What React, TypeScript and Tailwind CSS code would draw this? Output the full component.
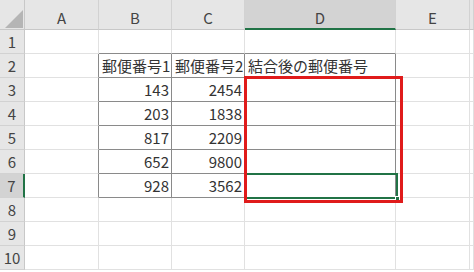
import React from "react";

const cols = ["A", "B", "C", "D", "E", ""];
const data: [string, string, string][] = [
  ["143", "2454", ""],
  ["203", "1838", ""],
  ["817", "2209", ""],
  ["652", "9800", ""],
  ["928", "3562", ""],
];

const font = { fontFamily: '"Noto Sans CJK JP", "Liberation Sans", sans-serif' };

export default function App() {
  const rows = Array.from({ length: 10 }, (_, i) => i + 1);
  const dark = "#8a8a8a";
  const grid = "#e1e1e1";

  const cellBorder = (r: number, c: number) => {
    const inTable = (rr: number, cc: number) => rr >= 2 && rr <= 7 && cc >= 2 && cc <= 4;
    const right = inTable(r, c) || inTable(r, c + 1) ? dark : grid;
    const bottom = inTable(r, c) || inTable(r + 1, c) ? dark : grid;
    return { borderRightColor: right, borderBottomColor: bottom };
  };

  const cellText = (r: number, c: number): { t: string; right: boolean } => {
    if (r === 2) {
      if (c === 2) return { t: "郵便番号1", right: false };
      if (c === 3) return { t: "郵便番号2", right: false };
      if (c === 4) return { t: "結合後の郵便番号", right: false };
    }
    if (r >= 3 && r <= 7) {
      if (c === 2) return { t: data[r - 3][0], right: true };
      if (c === 3) return { t: data[r - 3][1], right: true };
    }
    return { t: "", right: false };
  };

  return (
    <div className="relative w-[474px] h-[272px] overflow-hidden bg-white" style={font}>
      <div className="grid grid-cols-[25px_74px_73px_73px_151px_74px_1fr] grid-rows-[30px_repeat(10,24px)]">
        <div className="relative bg-[#e6e6e6] border-r border-b border-[#c8c8c8]">
          <svg className="absolute left-[5px] top-[10px]" width="18" height="18" viewBox="0 0 18 18">
            <polygon points="18,0 18,18 0,18" fill="#b5b5b5" />
          </svg>
        </div>
        {cols.map((c, i) => (
          <div
            key={c + i}
            className={
              "flex items-center justify-center pt-[6px] text-[15px] leading-none text-[#444] border-r border-[#d2d2d2] " +
              (i === 3
                ? "bg-[#d3d3d3] border-b-2 border-b-[#217346]"
                : "bg-[#e6e6e6] border-b border-b-[#c8c8c8]")
            }
          >
            {c}
          </div>
        ))}
        {rows.map((r) => (
          <React.Fragment key={r}>
            <div
              className={
                "flex items-center justify-center text-[15px] leading-none text-[#444] border-b border-[#d2d2d2] " +
                (r === 7
                  ? "bg-[#d3d3d3] border-r-2 border-r-[#217346]"
                  : "bg-[#e6e6e6] border-r border-r-[#c8c8c8]")
              }
            >
              {r}
            </div>
            {[1, 2, 3, 4, 5, 6].map((c) => {
              const { t, right } = cellText(r, c);
              return (
                <div
                  key={c}
                  className={
                    "flex items-center border-r border-b text-[15px] leading-none text-[#333] whitespace-nowrap overflow-hidden " +
                    (right ? "justify-end pr-[2px]" : "justify-start pl-[3px]")
                  }
                  style={cellBorder(r, c)}
                >
                  {t}
                </div>
              );
            })}
          </React.Fragment>
        ))}
      </div>
      <div className="absolute left-[244px] top-[173px] w-[154px] h-[26px] border-2 border-[#217346]">
        <div className="absolute right-[-4px] bottom-[-4px] w-[5px] h-[5px] bg-[#217346] border border-white" />
      </div>
      <div className="absolute left-[244px] top-[76px] w-[159px] h-[127px] border-[3px] border-[#e01b1b]" />
    </div>
  );
}
